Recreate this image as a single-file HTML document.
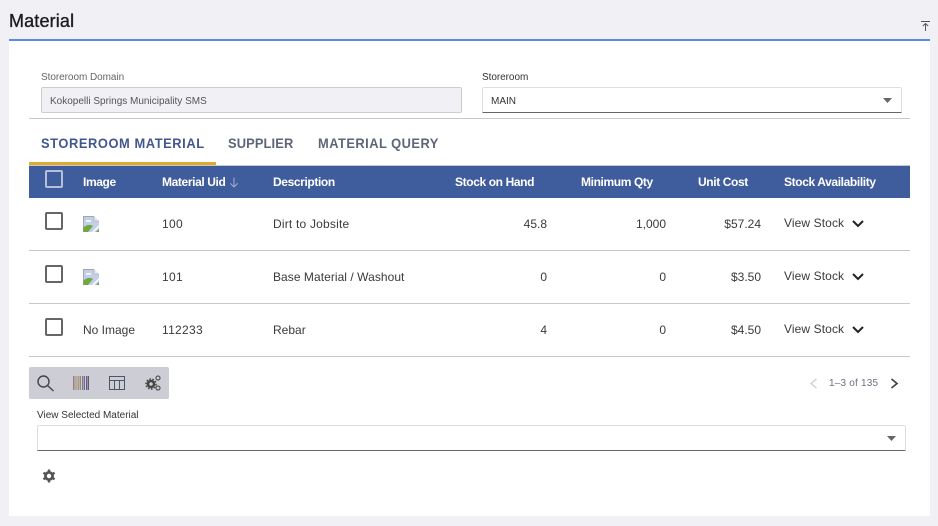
<!DOCTYPE html>
<html><head><meta charset="utf-8"><style>
html,body{margin:0;padding:0;width:938px;height:526px;overflow:hidden;background:#f0f0f5;font-family:"Liberation Sans",sans-serif}
.a{position:absolute}
.t{position:absolute;white-space:nowrap;line-height:16px;font-size:12px;color:#3a3a3a}
.h{position:absolute;white-space:nowrap;line-height:16px;font-size:12px;color:#fff;font-weight:bold;top:174px;letter-spacing:-.38px}
.r{text-align:right}
.tab{position:absolute;white-space:nowrap;font-size:14px;font-weight:bold;line-height:18px;top:134px;color:#5d6578;transform:scaleX(.92);transform-origin:0 50%}
.cb{position:absolute;left:45px;width:14px;height:14px;border:2px solid #666;border-radius:2px}
.ln{position:absolute;left:29px;width:881px;height:1px;background:#c8c8c8}
svg{position:absolute;overflow:visible}
</style></head><body>
<div class="t" style="left:9px;top:10px;font-size:18px;line-height:22px;color:#1c1c1c;letter-spacing:.15px;-webkit-text-stroke:.35px #1c1c1c">Material</div>
<svg style="left:920px;top:20px" width="11" height="12" viewBox="0 0 11 12"><path d="M1 1.500H10M5.500 11V3.500M2.800 6L5.500 3.500L8.200 6" fill="none" stroke="#555" stroke-width="1"/></svg>
<div class="a" style="left:9px;top:41px;width:921px;height:475px;background:#fff"></div>
<div class="a" style="left:9px;top:39px;width:921px;height:2px;background:#5b8ae6"></div>

<div class="t" style="left:41px;top:70px;font-size:10px;color:#666;letter-spacing:-.05px">Storeroom Domain</div>
<div class="a" style="left:41px;top:87px;width:419px;height:24px;background:#f0f0f5;border:1px solid #ccc;border-radius:2px"></div>
<div class="t" style="left:50px;top:94px;font-size:10px;color:#555">Kokopelli Springs Municipality SMS</div>
<div class="t" style="left:482px;top:70px;font-size:10px;color:#333;letter-spacing:-.05px">Storeroom</div>
<div class="a" style="left:482px;top:87px;width:418px;height:24px;background:#fff;border:1px solid #ddd;border-bottom:1px solid #666;border-radius:2px 2px 0 0"></div>
<div class="t" style="left:491px;top:94px;font-size:10px;color:#333">MAIN</div>
<svg style="left:883px;top:98px" width="9" height="5"><path d="M0 0H9L4.500 5Z" fill="#666"/></svg>
<div class="a" style="left:29px;top:118px;width:881px;height:1px;background:#c8c8c8"></div>

<div class="tab" style="left:41px;color:#41578f;letter-spacing:.62px">STOREROOM MATERIAL</div>
<div class="tab" style="left:228px;letter-spacing:.13px">SUPPLIER</div>
<div class="tab" style="left:318px;letter-spacing:.51px">MATERIAL QUERY</div>
<div class="a" style="left:29px;top:162px;width:187px;height:3px;background:#e0a92f"></div>
<div class="a" style="left:29px;top:165px;width:881px;height:1px;background:#c8c8c8"></div>

<div class="a" style="left:29px;top:166px;width:881px;height:32px;background:#3f5c9c"></div>
<div class="a" style="left:45px;top:170px;width:14px;height:14px;border:2px solid #b4bfd8;border-radius:2px"></div>
<div class="h" style="left:83px">Image</div>
<div class="h" style="left:162px">Material Uid</div>
<svg style="left:229px;top:177px" width="10" height="11"><path d="M5 .5V10M1.300 6.300L5 10L8.700 6.300" fill="none" stroke="#9fb0d2" stroke-width="1"/></svg>
<div class="h" style="left:273px">Description</div>
<div class="h" style="left:455px">Stock on Hand</div>
<div class="h" style="left:581px">Minimum Qty</div>
<div class="h" style="left:698px">Unit Cost</div>
<div class="h" style="left:784px">Stock Availability</div>

<div class="cb" style="top:212px"></div>
<svg style="left:83px;top:216px" width="16" height="16" viewBox="0 0 16 16"><path d="M0 0H11L16 5V16H0Z" fill="#c3cfe8"/><path d="M11 0V5H16" fill="#e8e8e8" stroke="#aaa" stroke-width=".6"/><path d="M0 16V12Q5 7 10 10L5 16Z" fill="#6fa83c"/><path d="M9 16L16 9V11L11 16Z" fill="#fff"/><path d="M13 16L16 13V16Z" fill="#6fa83c"/><path d="M3 4h5v2H3z" fill="#eef2fa"/><path d="M.5 16V.5H10.500" fill="none" stroke="#999" stroke-width=".7"/></svg>
<div class="t" style="left:162px;top:216px;letter-spacing:.3px">100</div>
<div class="t" style="left:273px;top:216px;letter-spacing:.2px">Dirt to Jobsite</div>
<div class="t r" style="left:480px;width:67px;top:216px">45.8</div>
<div class="t r" style="left:600px;width:66px;top:216px">1,000</div>
<div class="t r" style="left:700px;width:61px;top:216px">$57.24</div>
<div class="t" style="left:784px;top:215px;letter-spacing:.1px">View Stock</div>
<svg style="left:852px;top:220px" width="12" height="8"><path d="M1 1L6 6L11 1" fill="none" stroke="#222" stroke-width="2"/></svg>
<div class="ln" style="top:250px"></div>

<div class="cb" style="top:265px"></div>
<svg style="left:83px;top:269px" width="16" height="16" viewBox="0 0 16 16"><path d="M0 0H11L16 5V16H0Z" fill="#c3cfe8"/><path d="M11 0V5H16" fill="#e8e8e8" stroke="#aaa" stroke-width=".6"/><path d="M0 16V12Q5 7 10 10L5 16Z" fill="#6fa83c"/><path d="M9 16L16 9V11L11 16Z" fill="#fff"/><path d="M13 16L16 13V16Z" fill="#6fa83c"/><path d="M3 4h5v2H3z" fill="#eef2fa"/><path d="M.5 16V.5H10.500" fill="none" stroke="#999" stroke-width=".7"/></svg>
<div class="t" style="left:162px;top:269px;letter-spacing:.3px">101</div>
<div class="t" style="left:273px;top:269px;letter-spacing:.05px">Base Material / Washout</div>
<div class="t r" style="left:480px;width:67px;top:269px">0</div>
<div class="t r" style="left:600px;width:66px;top:269px">0</div>
<div class="t r" style="left:700px;width:61px;top:269px">$3.50</div>
<div class="t" style="left:784px;top:268px;letter-spacing:.1px">View Stock</div>
<svg style="left:852px;top:273px" width="12" height="8"><path d="M1 1L6 6L11 1" fill="none" stroke="#222" stroke-width="2"/></svg>
<div class="ln" style="top:303px"></div>

<div class="cb" style="top:318px"></div>
<div class="t" style="left:83px;top:322px">No Image</div>
<div class="t" style="left:162px;top:322px;letter-spacing:.3px">112233</div>
<div class="t" style="left:273px;top:322px">Rebar</div>
<div class="t r" style="left:480px;width:67px;top:322px">4</div>
<div class="t r" style="left:600px;width:66px;top:322px">0</div>
<div class="t r" style="left:700px;width:61px;top:322px">$4.50</div>
<div class="t" style="left:784px;top:321px;letter-spacing:.1px">View Stock</div>
<svg style="left:852px;top:326px" width="12" height="8"><path d="M1 1L6 6L11 1" fill="none" stroke="#222" stroke-width="2"/></svg>
<div class="ln" style="top:356px"></div>

<div class="a" style="left:29px;top:367px;width:140px;height:32px;background:#cdcdd6;border-radius:2px"></div>
<svg style="left:37px;top:375px" width="17" height="17" viewBox="0 0 17 17"><circle cx="6.500" cy="6.500" r="5.500" fill="none" stroke="#444" stroke-width="1.400"/><path d="M10.500 10.500L16.500 16" stroke="#444" stroke-width="1.400"/></svg>
<svg style="left:73px;top:376px" width="16" height="14"><rect x="0" width="1.500" height="14" fill="#a87a62"/><rect x="2.500" width="1" height="14" fill="#7a86a8"/><rect x="4.500" width="2" height="14" fill="#b09a70"/><rect x="7" width="1" height="14" fill="#7f9380"/><rect x="9" width="1.500" height="14" fill="#97708a"/><rect x="11" width="1" height="14" fill="#66709c"/><rect x="13" width="1.500" height="14" fill="#6a5a88"/><rect x="15" width="1" height="14" fill="#5c5c66"/></svg>
<svg style="left:109px;top:376px" width="16" height="14" viewBox="0 0 16 14"><path d="M.5.5H15.500V13.500H.5ZM.5 4.500H15.500M5.500 4.500V13.500M10.500 4.500V13.500" fill="none" stroke="#4c5468" stroke-width="1"/></svg>
<svg style="left:145px;top:375px" width="16" height="16" viewBox="0 0 16 16"><circle cx="6" cy="9" r="3" fill="none" stroke="#444" stroke-width="2.500"/><circle cx="6" cy="9" r="5" fill="none" stroke="#444" stroke-width="1.500" stroke-dasharray="1.600 1.500"/><circle cx="13" cy="3" r="2" fill="none" stroke="#555" stroke-width="1.200"/><circle cx="13" cy="13" r="2" fill="none" stroke="#555" stroke-width="1.200"/></svg>

<svg style="left:809px;top:378px" width="9" height="11"><path d="M7.500 1L2 5.500L7.500 10" fill="none" stroke="#d4d4d4" stroke-width="1.500"/></svg>
<div class="t" style="left:829px;top:376px;font-size:10px;color:#6c7080;letter-spacing:.2px">1–3 of 135</div>
<svg style="left:890px;top:378px" width="9" height="11"><path d="M1.500 1L7 5.500L1.500 10" fill="none" stroke="#444" stroke-width="1.700"/></svg>

<div class="t" style="left:37px;top:408px;font-size:10px;color:#333">View Selected Material</div>
<div class="a" style="left:37px;top:425px;width:867px;height:24px;background:#fff;border:1px solid #ddd;border-bottom:1px solid #666;border-radius:2px 2px 0 0"></div>
<svg style="left:887px;top:436px" width="9" height="5"><path d="M0 0H9L4.500 5Z" fill="#666"/></svg>
<svg style="left:42px;top:469px" width="14" height="14" viewBox="0 0 14 14"><circle cx="7" cy="7" r="3.600" fill="none" stroke="#555" stroke-width="2.800"/><path d="M7 .5V3M7 11V13.500M1.400 3.750L3.500 5M10.500 9L12.600 10.250M1.400 10.250L3.500 9M10.500 5L12.600 3.750" stroke="#555" stroke-width="2.400"/></svg>
</body></html>
